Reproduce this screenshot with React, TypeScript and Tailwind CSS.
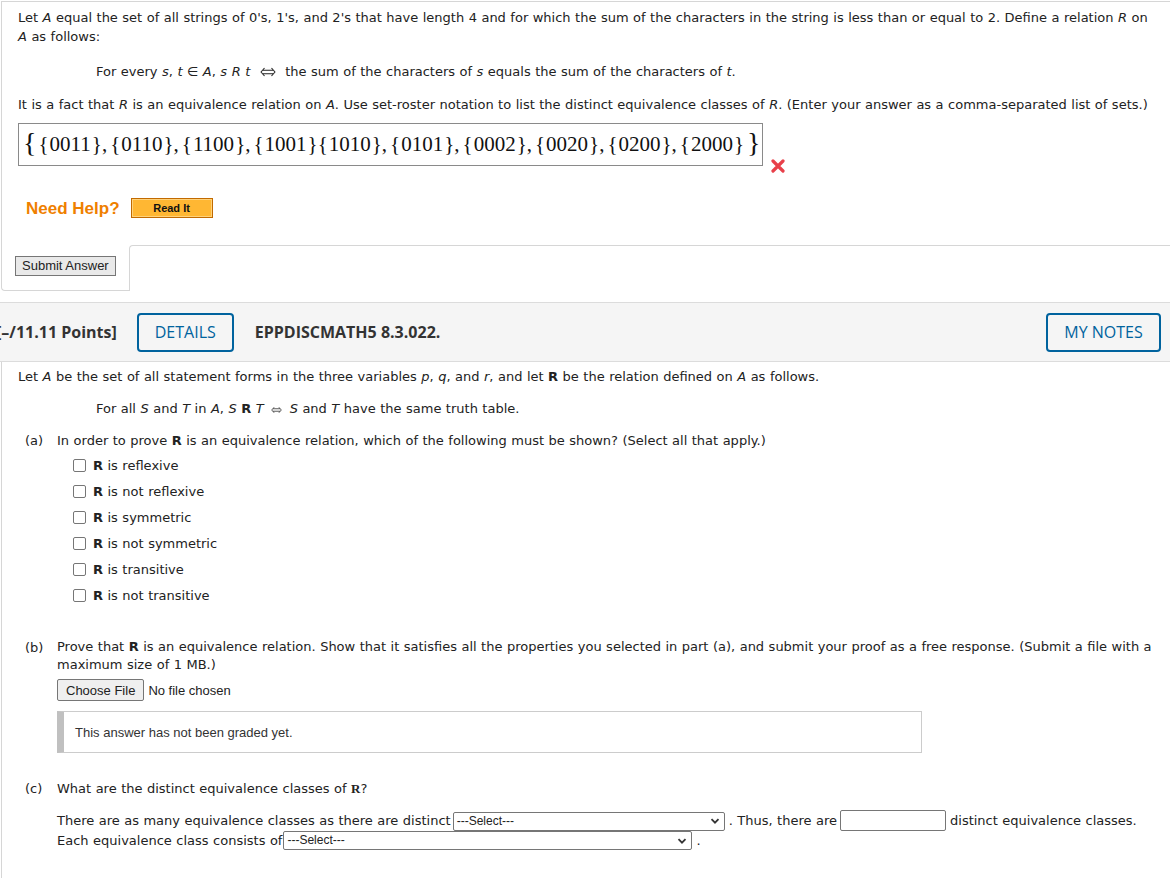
import React from "react";

const verdana = { fontFamily: '"DejaVu Sans", Verdana, sans-serif' };

function Checkbox() {
  return <span className="inline-block w-[13px] h-[13px] border border-[#767676] rounded-[2px] bg-white mr-[7px] shrink-0" />;
}

function Chevron() {
  return (
    <svg width="10" height="10" viewBox="0 0 10 10" className="shrink-0">
      <path d="M1.5 3.2 L5 6.7 L8.5 3.2" stroke="#333" strokeWidth="1.8" fill="none" />
    </svg>
  );
}

function DoubleArrow({ w, h }: { w: number; h: number }) {
  return (
    <svg width={w} height={h} viewBox="0 0 16 10" className="inline-block align-[-1px]">
      <path d="M3 3.2 H13 M3 6.8 H13" stroke="#222" strokeWidth="1.1" fill="none" />
      <path d="M4.5 1 L1 5 L4.5 9 M11.5 1 L15 5 L11.5 9" stroke="#222" strokeWidth="1.1" fill="none" strokeLinejoin="round" />
    </svg>
  );
}

function Select({ w }: { w: string }) {
  return (
    <span
      className={`inline-flex items-center justify-between h-[19px] border border-[#767676] rounded-[2px] bg-white pl-[3px] pr-[4px] align-middle text-[12px] text-[#222] [word-spacing:0px] ${w}`}
      style={{ fontFamily: '"Liberation Sans", Arial, sans-serif' }}
    >
      <span>---Select---</span>
      <Chevron />
    </span>
  );
}

export default function App() {
  const opts = [
    "is reflexive",
    "is not reflexive",
    "is symmetric",
    "is not symmetric",
    "is transitive",
    "is not transitive",
  ];
  const sets = ["0011", "0110", "1100", "1001", "1010", "0101", "0002", "0020", "0200", "2000"];
  return (
    <div className="w-[1170px] h-[878px] overflow-hidden bg-white text-[13px] text-[#222] [word-spacing:0.35px]" style={verdana}>
      {/* Question 1 panel */}
      <div className="ml-px mt-px border-l border-t border-[#d6d6d6] h-[244px] pl-[16px] pt-[6px] leading-[19px]">
        <p className="pr-[18px]">
          Let <i>A</i> equal the set of all strings of 0's, 1's, and 2's that have length 4 and for which the sum of the characters in the string is less than or equal to 2. Define a relation <i>R</i> on <i>A</i> as follows:
        </p>
        <p className="pl-[78px] mt-[16px]">
          For every <i>s</i>, <i>t</i> ∈ <i>A</i>, <i>s</i> <i>R</i> <i>t</i> <span className="mx-[5px]"><DoubleArrow w={16} h={10} /></span> the sum of the characters of <i>s</i> equals the sum of the characters of <i>t</i>.
        </p>
        <p className="mt-[14px]">
          It is a fact that <i>R</i> is an equivalence relation on <i>A</i>. Use set-roster notation to list the distinct equivalence classes of <i>R</i>. (Enter your answer as a comma-separated list of sets.)
        </p>
        <div className="flex items-start mt-[9px]">
          <div
            className="h-[43px] w-[745px] shrink-0 border border-[#8a8a8a] flex items-center pl-[4px] text-[21px] text-[#111] [word-spacing:0px]"
            style={{ fontFamily: '"Liberation Serif", "DejaVu Serif", serif' }}
          >
            <span className="text-[28px] mr-[2px] leading-none mb-[3px]">{"{"}</span>
            {sets.map((s, i) => (
              <span key={s} className="flex items-center">
                <span className="mr-[1px]">{"{"}</span>
                {s}
                <span className="ml-[1px]">{"}"}</span>
                {i < sets.length - 1 && i !== 3 ? <span className="mr-[3px]">,</span> : null}
              </span>
            ))}
            <span className="text-[28px] ml-[3px] leading-none mb-[3px]">{"}"}</span>
          </div>
          <svg width="14" height="14" viewBox="0 0 14 14" className="ml-[8px] mt-[36px]">
            <path d="M2 2 L12 12 M12 2 L2 12" stroke="#e8404a" strokeWidth="3.2" strokeLinecap="round" />
          </svg>
        </div>
        <div className="flex items-center mt-[25px] pl-[8px]">
          <span
            className="text-[17px] font-bold text-[#ef7f00] [word-spacing:0px]"
            style={{ fontFamily: '"Liberation Sans", Arial, sans-serif' }}
          >
            Need Help?
          </span>
          <span
            className="ml-[11px] w-[82px] h-[20px] border border-[#c26a00] bg-[#ffb733] flex items-center justify-center text-[11px] font-bold text-[#111] shadow-[inset_0_0_0_1px_#ffd27a] [word-spacing:0px]"
            style={{ fontFamily: '"Liberation Sans", Arial, sans-serif' }}
          >
            Read It
          </span>
        </div>
      </div>
      <div className="flex ml-px h-[46px]">
        <div className="w-[128px] border-l border-b border-[#d6d6d6] rounded-bl-[4px] pl-[13px] pt-[11px]">
          <span
            className="inline-flex items-center h-[20px] px-[6px] border border-[#767676] bg-[#e9e9e9] text-[13px] text-[#222] [word-spacing:0px]"
            style={{ fontFamily: '"Liberation Sans", Arial, sans-serif' }}
          >
            Submit Answer
          </span>
        </div>
        <div className="flex-1 border-t border-l border-[#d6d6d6] rounded-tl-[4px]" />
      </div>

      {/* Header bar */}
      <div
        className="mt-[11px] h-[60px] border-t border-b border-[#dcdcdc] bg-[#f5f5f5] flex items-center text-[16px] text-[#333] [word-spacing:0px]"
        style={{ fontFamily: '"Open Sans", sans-serif' }}
      >
        <span className="font-bold -ml-[4px]">[–/11.11 Points]</span>
        <span className="ml-[20px] w-[97px] h-[39px] border-2 border-[#00639e] rounded-[4px] flex items-center justify-center text-[#00639e]">
          DETAILS
        </span>
        <span className="ml-[21px] font-bold">EPPDISCMATH5 8.3.022.</span>
        <span className="ml-auto mr-[9px] w-[115px] h-[39px] border-2 border-[#00639e] rounded-[4px] flex items-center justify-center text-[#00639e]">
          MY NOTES
        </span>
      </div>

      {/* Question 2 */}
      <div className="ml-px border-l border-[#d6d6d6] pl-[16px] pt-[5px] h-[600px] leading-[19px]">
        <p>
          Let <i>A</i> be the set of all statement forms in the three variables <i>p</i>, <i>q</i>, and <i>r</i>, and let <b>R</b> be the relation defined on <i>A</i> as follows.
        </p>
        <p className="pl-[78px] mt-[13px]">
          For all <i>S</i> and <i>T</i> in <i>A</i>, <i>S</i> <b>R</b> <i>T</i> <span className="mx-[3px]"><DoubleArrow w={11} h={8} /></span> <i>S</i> and <i>T</i> have the same truth table.
        </p>
        <div className="flex mt-[13px] pl-[7px]">
          <span className="w-[32px]">(a)</span>
          <div>
            <p>
              In order to prove <b>R</b> is an equivalence relation, which of the following must be shown? (Select all that apply.)
            </p>
            <div className="pl-[16px] mt-[2px]">
              {opts.map((o) => (
                <div key={o} className="flex items-center h-[26px]">
                  <Checkbox />
                  <span>
                    <b>R</b> {o}
                  </span>
                </div>
              ))}
            </div>
          </div>
        </div>

        <div className="flex mt-[30px] pl-[7px]">
          <span className="w-[32px] shrink-0">(b)</span>
          <div className="flex-1 pr-[10px]">
            <p className="leading-[18px]">
              Prove that <b>R</b> is an equivalence relation. Show that it satisfies all the properties you selected in part (a), and submit your proof as a free response. (Submit a file with a maximum size of 1 MB.)
            </p>
            <div
              className="flex items-center mt-[5px] text-[13px] [word-spacing:0px]"
              style={{ fontFamily: '"Liberation Sans", Arial, sans-serif' }}
            >
              <span className="inline-flex items-center h-[22px] px-[8px] border border-[#767676] rounded-[2px] bg-[#efefef]">
                Choose File
              </span>
              <span className="ml-[4px]">No file chosen</span>
            </div>
            <div
              className="mt-[10px] w-[865px] h-[42px] border border-[#cccccc] border-l-[7px] border-l-[#c0c0c0] flex items-center pl-[11px] text-[13px] text-[#333] [word-spacing:0px]"
              style={{ fontFamily: '"Liberation Sans", Arial, sans-serif' }}
            >
              This answer has not been graded yet.
            </div>
          </div>
        </div>

        <div className="flex mt-[26px] pl-[7px]">
          <span className="w-[32px] shrink-0">(c)</span>
          <div className="flex-1">
            <p>
              What are the distinct equivalence classes of <b style={{ fontFamily: '"Liberation Serif", serif' }}>R</b>?
            </p>
            <div className="mt-[12px] flex items-center">
              <span>There are as many equivalence classes as there are distinct</span>
              <span className="ml-[2px]"><Select w="w-[272px]" /></span>
              <span className="ml-[4px]">. Thus, there are</span>
              <span className="ml-[3px] inline-block w-[106px] h-[21px] border border-[#767676] rounded-[2px]" />
              <span className="ml-[4px]">distinct equivalence classes.</span>
            </div>
            <div className="flex items-center -mt-[1px]">
              <span>Each equivalence class consists of</span>
              <span className="ml-[1px]"><Select w="w-[409px]" /></span>
              <span className="ml-[4px]">.</span>
            </div>
          </div>
        </div>
      </div>
    </div>
  );
}
